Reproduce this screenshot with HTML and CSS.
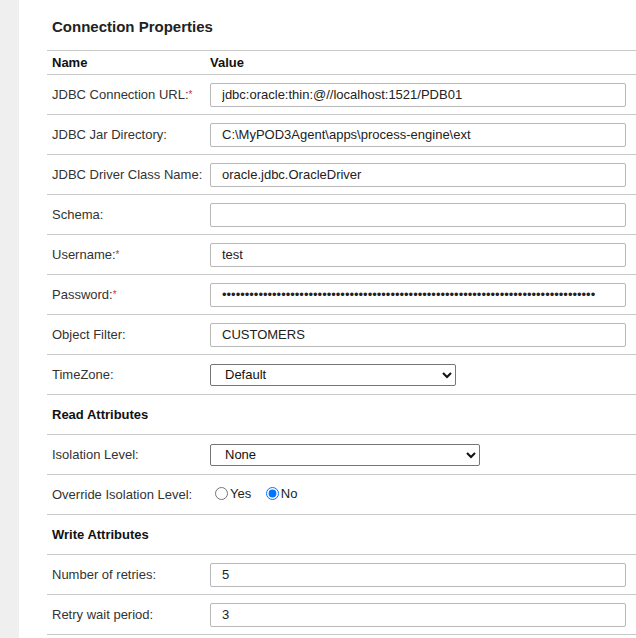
FILE: index.html
```html
<!DOCTYPE html>
<html lang="en">
<head>
    <meta charset="UTF-8">
    <meta name="viewport" content="width=device-width, initial-scale=1.0">
    <title>Connection Properties</title>
    <link rel="stylesheet" href="styles.css">
</head>
<body>
    <div class="page">
        <div class="side-strip"></div>
        <div class="panel">
            <h2 class="panel-title">Connection Properties</h2>
            <table class="props">
                <tr class="head-row">
                    <th class="name-col">Name</th>
                    <th>Value</th>
                </tr>
                <tr>
                    <td>JDBC Connection URL:<span class="req">*</span></td>
                    <td><input type="text" class="prop-input" value="jdbc:oracle:thin:@//localhost:1521/PDB01"></td>
                </tr>
                <tr>
                    <td>JDBC Jar Directory:</td>
                    <td><input type="text" class="prop-input" value="C:\MyPOD3Agent\apps\process-engine\ext"></td>
                </tr>
                <tr>
                    <td>JDBC Driver Class Name:</td>
                    <td><input type="text" class="prop-input" value="oracle.jdbc.OracleDriver"></td>
                </tr>
                <tr>
                    <td>Schema:</td>
                    <td><input type="text" class="prop-input" value=""></td>
                </tr>
                <tr>
                    <td>Username:<span class="req">*</span></td>
                    <td><input type="text" class="prop-input" value="test"></td>
                </tr>
                <tr>
                    <td>Password:<span class="req">*</span></td>
                    <td><input type="password" class="prop-input" value="xxxxxxxxxxxxxxxxxxxxxxxxxxxxxxxxxxxxxxxxxxxxxxxxxxxxxxxxxxxxxxxxxxxxxxxxxxxxxxxxxx"></td>
                </tr>
                <tr>
                    <td>Object Filter:</td>
                    <td><input type="text" class="prop-input" value="CUSTOMERS"></td>
                </tr>
                <tr>
                    <td>TimeZone:</td>
                    <td>
                        <select class="prop-select tz-select">
                            <option>Default</option>
                        </select>
                    </td>
                </tr>
                <tr class="section-row">
                    <td colspan="2">Read Attributes</td>
                </tr>
                <tr>
                    <td>Isolation Level:</td>
                    <td>
                        <select class="prop-select iso-select">
                            <option>None</option>
                        </select>
                    </td>
                </tr>
                <tr>
                    <td>Override Isolation Level:</td>
                    <td class="radio-cell">
                        <label class="radio-opt"><input type="radio" name="override">Yes</label>
                        <label class="radio-opt"><input type="radio" name="override" checked>No</label>
                    </td>
                </tr>
                <tr class="section-row">
                    <td colspan="2">Write Attributes</td>
                </tr>
                <tr>
                    <td>Number of retries:</td>
                    <td><input type="text" class="prop-input" value="5"></td>
                </tr>
                <tr>
                    <td>Retry wait period:</td>
                    <td><input type="text" class="prop-input" value="3"></td>
                </tr>
            </table>
        </div>
    </div>
</body>
</html>
```

FILE: styles.css
```css
body {
    margin: 0;
    background-color: #ffffff;
    font-family: "Liberation Sans", Arial, sans-serif;
    font-size: 13px;
    color: #333333;
}

.page {
    display: flex;
    min-height: 100vh;
}

.side-strip {
    width: 19px;
    flex-shrink: 0;
    background-color: #efefef;
}

.panel {
    flex: 1;
    min-width: 0;
    padding-left: 28px;
}

.panel-title {
    margin: 0;
    padding: 18px 0 0 5px;
    height: 32px;
    font-size: 15px;
    font-weight: bold;
    color: #222222;
}

.props {
    width: 100%;
    table-layout: fixed;
    border-collapse: collapse;
    border-bottom: 1px solid #c8c8c8;
}

.props tr {
    border-top: 1px solid #c8c8c8;
}

.props th {
    height: 23px;
    padding: 0 5px;
    text-align: left;
    font-weight: bold;
    color: #111111;
}

.props td {
    height: 39px;
    padding: 0 5px;
    vertical-align: middle;
    white-space: nowrap;
}

.props .name-col {
    width: 148px;
}

.section-row td {
    font-weight: bold;
    color: #111111;
}

.req {
    color: #d0323c;
    font-size: 10px;
    vertical-align: 1px;
}

.prop-input {
    box-sizing: border-box;
    width: 416px;
    height: 24px;
    margin: 0;
    padding: 0 11px;
    border: 1px solid #b8b8b8;
    border-radius: 2px;
    font-family: "Liberation Sans", Arial, sans-serif;
    font-size: 13px;
    color: #222222;
}

.prop-select {
    box-sizing: border-box;
    height: 22px;
    margin: 0;
    padding: 0 0 0 10px;
    border: 1px solid #767676;
    border-radius: 2px;
    background-color: #ffffff;
    font-family: "Liberation Sans", Arial, sans-serif;
    font-size: 13px;
    color: #111111;
}

.tz-select {
    width: 246px;
}

.iso-select {
    width: 270px;
}

.radio-opt {
    display: inline-flex;
    align-items: center;
    margin-right: 6px;
    color: #222222;
}

.radio-opt input {
    margin: 1px 2px 0 5px;
}
```
